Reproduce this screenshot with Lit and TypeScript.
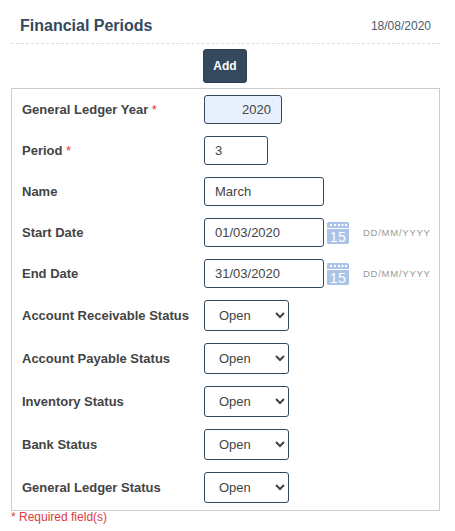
import { LitElement, html, css } from "lit";
import { customElement } from "lit/decorators.js";

const calIcon = html`<svg class="cal" width="22" height="22" viewBox="0 0 22 22" aria-hidden="true">
  <rect x="0" y="0" width="22" height="22" rx="1.5" fill="#a9c4e8"></rect>
  <rect x="0" y="6" width="22" height="1" fill="#fff"></rect>
  <g fill="#fff"><rect x="3" y="2" width="2" height="2"></rect><rect x="7" y="2" width="2" height="2"></rect><rect x="11" y="2" width="2" height="2"></rect><rect x="14.5" y="2" width="2" height="2"></rect><rect x="18" y="2" width="2" height="2"></rect></g>
  <text x="11" y="19.5" text-anchor="middle" class="calnum">15</text>
</svg>`;

@customElement("app-root")
export class AppRoot extends LitElement {
  static styles = css`
    :host { display: block; width: 455px; height: 531px; background: #fff; font-family: "Liberation Sans", Arial, sans-serif; color: #333; box-sizing: border-box; padding: 0 15px 0 11px; overflow: hidden; }
    * { box-sizing: border-box; }
    .head { display: flex; justify-content: space-between; align-items: center; height: 44px; padding: 8px 9px 0 9px; border-bottom: 1px dashed #ddd; }
    h1 { margin: 0; font: bold 16px "Liberation Sans", Arial, sans-serif; color: #34495e; }
    .date { font: 12px "Liberation Sans", Arial, sans-serif; color: #4a5b70; }
    .actions { display: flex; justify-content: flex-start; padding: 5px 0 5px 192px; }
    button { width: 44px; height: 34px; border: 1px solid #2c3e50; border-radius: 3px; background: #34495e; color: #fff; font: bold 12px "Liberation Sans", Arial, sans-serif; padding: 0; }
    .panel { border: 1px solid #ccc; height: 423px; padding: 6px 0 0 10px; display: flex; flex-direction: column; }
    .row { display: grid; grid-template-columns: 182px auto; align-items: center; height: 29px; margin-bottom: 12px; }
    .row.sel { height: 31px; margin-bottom: 12px; }
    label { font: bold 13px "Liberation Sans", Arial, sans-serif; color: #444; }
    .req { color: #e03a3a; font-weight: normal; }
    .ctl { display: flex; align-items: center; }
    input { height: 29px; border: 1px solid #34495e; border-radius: 3px; font: 13px "Liberation Sans", Arial, sans-serif; color: #444; padding: 0 10px; background: #fff; outline: none; }
    .year { width: 78px; text-align: right; background: #e8f0fe; }
    .period { width: 64px; }
    .name { width: 120px; }
    .cal { margin-left: 3px; flex: none; }
    .calnum { font: 14px "Liberation Sans", Arial, sans-serif; letter-spacing: 0.5px; fill: #fff; }
    .fmt { font: 9.5px "Liberation Sans", Arial, sans-serif; letter-spacing: 0.75px; color: #999; margin-left: 14px; }
    select { width: 85px; height: 31px; border: 1px solid #34495e; border-radius: 3px; background: #fff; font: 13px "Liberation Sans", Arial, sans-serif; color: #444; padding: 0 0 0 10px; outline: none; }
    .note { font: 12px/13px "Liberation Sans", Arial, sans-serif; color: #e03a3a; }
  `;

  private sel(label: string) {
    return html`<div class="row sel"><label>${label}</label><div class="ctl"><select><option>Open</option><option>Closed</option></select></div></div>`;
  }

  private dateRow(label: string, v: string) {
    return html`<div class="row"><label>${label}</label><div class="ctl"><input class="name" .value=${v} />${calIcon}<span class="fmt">DD/MM/YYYY</span></div></div>`;
  }

  render() {
    return html`
      <div class="head"><h1>Financial Periods</h1><span class="date">18/08/2020</span></div>
      <div class="actions"><button>Add</button></div>
      <div class="panel">
        <div class="row"><label>General Ledger Year <span class="req">*</span></label><div class="ctl"><input class="year" .value=${"2020"} /></div></div>
        <div class="row"><label>Period <span class="req">*</span></label><div class="ctl"><input class="period" .value=${"3"} /></div></div>
        <div class="row"><label>Name</label><div class="ctl"><input class="name" .value=${"March"} /></div></div>
        ${this.dateRow("Start Date", "01/03/2020")}
        ${this.dateRow("End Date", "31/03/2020")}
        ${this.sel("Account Receivable Status")}
        ${this.sel("Account Payable Status")}
        ${this.sel("Inventory Status")}
        ${this.sel("Bank Status")}
        ${this.sel("General Ledger Status")}
      </div>
      <div class="note">* Required field(s)</div>
    `;
  }
}
